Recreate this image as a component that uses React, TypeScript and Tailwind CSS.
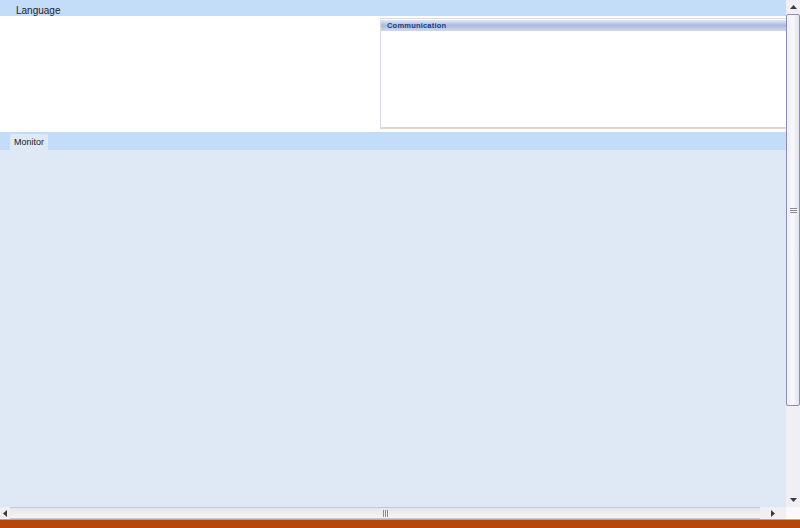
import React from "react";

function ArrowUp() {
  return (
    <svg width="7" height="4" viewBox="0 0 7 4"><path d="M0 4 L3.5 0 L7 4 Z" fill="#3a3a48" /></svg>
  );
}
function ArrowDown() {
  return (
    <svg width="7" height="4" viewBox="0 0 7 4"><path d="M0 0 L3.5 4 L7 0 Z" fill="#3a3a48" /></svg>
  );
}
function ArrowLeft() {
  return (
    <svg width="4" height="7" viewBox="0 0 4 7"><path d="M4 0 L0 3.5 L4 7 Z" fill="#3a3a48" /></svg>
  );
}
function ArrowRight() {
  return (
    <svg width="4" height="7" viewBox="0 0 4 7"><path d="M0 0 L4 3.5 L0 7 Z" fill="#3a3a48" /></svg>
  );
}

export default function App() {
  return (
    <div
      className="flex h-[528px] w-[800px] flex-col overflow-hidden bg-white"
      style={{ fontFamily: '"Liberation Sans", Arial, sans-serif' }}
    >
      <div className="flex h-[507px]">
        {/* content */}
        <div className="flex w-[786px] flex-col">
          <div className="flex h-[16px] items-center bg-[#c2dcfa] pt-[5px] pl-[16px] text-[10px] text-[#222]">
            Language
          </div>
          <div className="flex h-[116px] bg-white pt-[2px] pb-[3px]">
            <div className="w-[380px]" />
            <div className="flex flex-1 flex-col rounded-tl-[2px] border-l border-t border-[#d8dce4] border-b-2 border-b-[#e2d6c8] shadow-[inset_0_-3px_0_#ececec]">
              <div className="mt-[1px] flex h-[11px] items-center bg-gradient-to-b from-[#e2e9f6] via-[#a9bbdc] to-[#cfd9ec] pl-[6px] text-[7.5px] font-bold tracking-[0.2px] text-[#1e3d84]">
                Communication
              </div>
              <div className="flex-1 bg-white" />
            </div>
          </div>
          <div className="flex h-[18px] items-end bg-[#c2dcfa] pl-[10px]">
            <div className="flex h-[16px] w-[38px] items-center justify-center rounded-t-[2px] bg-[#dfe8f5] pt-[1px] text-[9px] text-[#222]">
              Monitor
            </div>
          </div>
          <div className="flex-1 bg-[#dfe8f5]" />
        </div>
        {/* vertical scrollbar */}
        <div className="flex w-[14px] flex-col bg-[#f0f0f4]">
          <div className="flex h-[14px] items-center justify-center">
            <ArrowUp />
          </div>
          <div className="flex h-[392px] items-center justify-center rounded-[2px] border border-[#8d8fb8] bg-gradient-to-r from-[#eef0f6] via-[#f8f8fc] to-[#e2e4ee]">
            <div className="flex w-[7px] flex-col gap-[1px]">
              <div className="h-[1px] bg-[#8a8a9a]" />
              <div className="h-[1px] bg-[#8a8a9a]" />
              <div className="h-[1px] bg-[#8a8a9a]" />
            </div>
          </div>
          <div className="flex-1" />
          <div className="flex h-[14px] items-center justify-center">
            <ArrowDown />
          </div>
        </div>
      </div>
      {/* horizontal scrollbar */}
      <div className="flex h-[12px] bg-[#f0f0f4]">
        <div className="flex w-[10px] items-center justify-center">
          <ArrowLeft />
        </div>
        <div className="flex w-[750px] items-center justify-center border-t border-b border-[#c4c8d4] bg-gradient-to-b from-[#e4e6ee] to-[#f4f5f8]">
          <div className="flex h-[7px] gap-[1px]">
            <div className="w-[1px] bg-[#8a8a9a]" />
            <div className="w-[1px] bg-[#8a8a9a]" />
            <div className="w-[1px] bg-[#8a8a9a]" />
          </div>
        </div>
        <div className="flex w-[26px] items-center justify-center">
          <ArrowRight />
        </div>
        <div className="w-[14px] bg-[#fafafa]" />
      </div>
      {/* status strip */}
      <div className="h-[9px] border-t border-[#e89a60] bg-[#b5470a]" />
    </div>
  );
}
